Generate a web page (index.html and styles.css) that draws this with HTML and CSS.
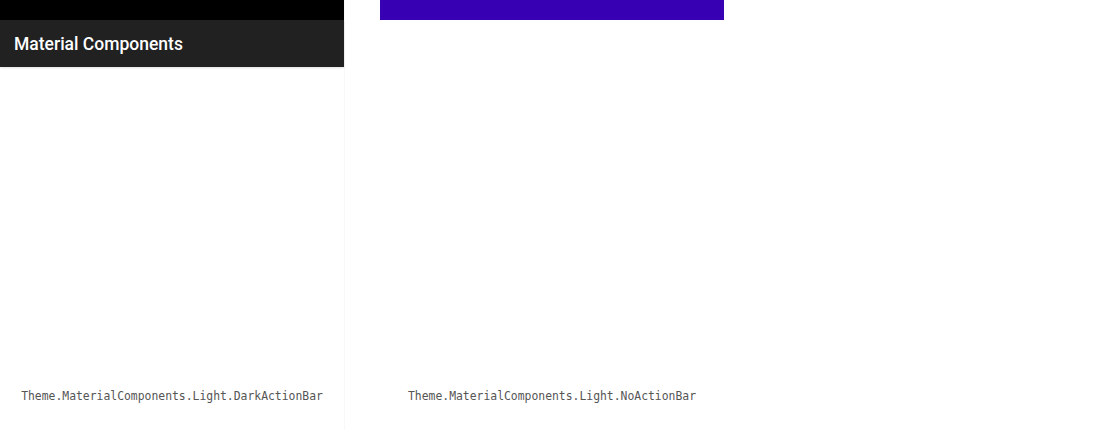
FILE: index.html
```
<!DOCTYPE html>
<html lang="en">
<head>
    <meta charset="UTF-8">
    <meta name="viewport" content="width=device-width, initial-scale=1.0">
    <title>Theme previews</title>
    <link rel="stylesheet" href="styles.css">
</head>
<body>

    <div class="previews">
        <!-- DarkActionBar: status bar + toolbar -->
        <div class="preview preview-edge">
            <div class="screen">
                <div class="status-bar status-dark"></div>
                <div class="toolbar">Material Components</div>
            </div>
            <div class="caption">Theme.MaterialComponents.Light.DarkActionBar</div>
        </div>

        <!-- NoActionBar: status bar only -->
        <div class="preview">
            <div class="screen">
                <div class="status-bar status-primary"></div>
            </div>
            <div class="caption">Theme.MaterialComponents.Light.NoActionBar</div>
        </div>
    </div>

</body>
</html>
```

FILE: styles.css
```
/* 기본 설정 */
body {
    margin: 0;
    background: #fff;
    font-family: Roboto, 'Liberation Sans', sans-serif;
}

.previews {
    display: flex;
    gap: 36px;
}

.preview {
    width: 344px;
    display: flex;
    flex-direction: column;
    min-height: 430px;
}
.preview-edge {
    box-shadow: 1px 0 0 #f8f8f8;
}

.screen {
    height: 388px;
}

.status-bar { height: 20px; }
.status-dark { background: #000; }
.status-primary { background: #3700b3; }

.toolbar {
    height: 47px;
    background: #212121;
    color: #fff;
    font-size: 17.5px;
    font-weight: 500;
    padding-left: 14px;
    display: flex;
    align-items: center;
    box-shadow: 0 1px 2px rgba(0, 0, 0, 0.12);
}

.caption {
    font-family: 'DejaVu Sans Mono', 'Liberation Mono', monospace;
    font-size: 11.4px;
    line-height: 16px;
    color: #555;
    text-align: center;
}
```
